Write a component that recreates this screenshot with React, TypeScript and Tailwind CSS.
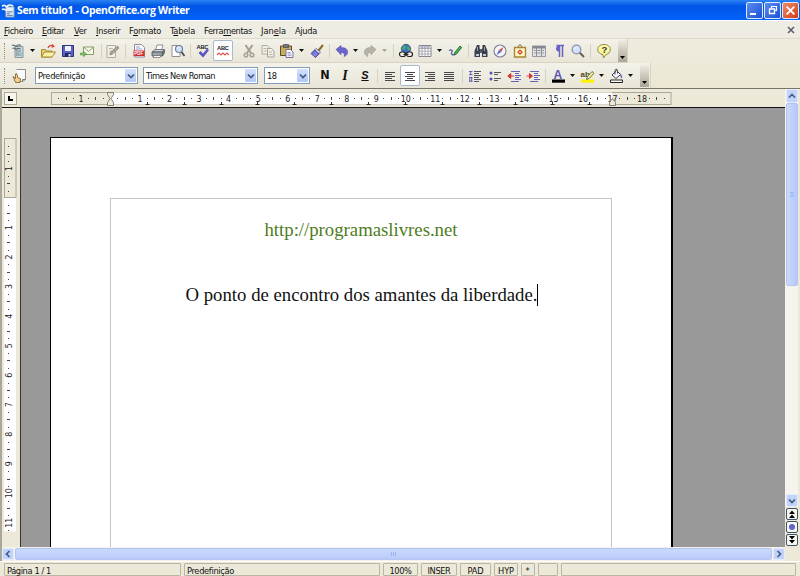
import { useLayoutEffect, useRef, type ReactNode } from "react";

/* Text whose tracking is adjusted so that it fills an exact width. */
function Fit({ w, children, className = "" }: { w: number; children: ReactNode; className?: string }) {
  const ref = useRef<HTMLSpanElement>(null);
  useLayoutEffect(() => {
    const el = ref.current;
    if (!el) return;
    el.style.letterSpacing = "0px";
    const natural = el.getBoundingClientRect().width;
    const count = (el.textContent ?? "").length;
    el.style.letterSpacing = `${(w - natural) / count}px`;
  }, [w]);
  return (
    <span ref={ref} className={`inline-block shrink-0 whitespace-nowrap ${className}`}>
      {children}
    </span>
  );
}

function Icon({ children, size = "size-4" }: { children: ReactNode; size?: string }) {
  return (
    <svg viewBox="0 0 16 16" className={`${size} shrink-0`} fill="none">
      {children}
    </svg>
  );
}

function Slot({ w, children }: { w: string; children?: ReactNode }) {
  return <div className={`flex h-full shrink-0 items-center justify-center ${w}`}>{children}</div>;
}

const Sep = ({ w }: { w: string }) => (
  <Slot w={w}>
    <div className="h-3.5 w-px shrink-0 bg-[#d6d2c2]" />
  </Slot>
);

const Arrow = ({ muted = false }: { muted?: boolean }) => (
  <Slot w="w-[9px]">
    <svg viewBox="0 0 5 3" className="h-[3px] w-[5px]">
      <path d="M0 0h5L2.5 3z" fill={muted ? "#a9a698" : "#111"} />
    </svg>
  </Slot>
);

const Grip = () => (
  <Slot w="w-2">
    <div className="h-4 w-0 border-l border-dotted border-[#8f8b7c]" />
  </Slot>
);

const Overflow = ({ h }: { h: string }) => (
  <div className={`flex w-[9px] shrink-0 items-end justify-center bg-linear-to-b from-[#eeebe0] to-[#aaa798] pb-[3px] ${h}`}>
    <svg viewBox="0 0 5 3" className="h-[3px] w-[5px]">
      <path d="M0 0h5L2.5 3z" fill="#000" />
    </svg>
  </div>
);

/* ---------- standard toolbar icons ---------- */

const NewDoc = () => (
  <Icon>
    <path d="M5 3.500h8v11H5z" fill="#c9d6dc" stroke="#8496a0" />
    <path d="M2 2.500c2-1 3 0 4 1 1-1.200 3-2 5-1M2.500 5.500c2-.8 3 0 3.500 1 1-1 3-1.500 4.500-.5" stroke="#5b717b" strokeWidth="1.200" />
    <path d="M6 8h5M6 10h3M6 12h5" stroke="#6f848e" />
    <path d="M9.500 9.500h3v3h-3z" fill="#8fc0cc" />
  </Icon>
);
const Open = () => (
  <Icon>
    <path d="M1.500 14V6.500h4l1 1.500H12v6z" fill="#e8cf6a" stroke="#a58a35" />
    <path d="M1.500 14l3-5h11l-3.500 5z" fill="#fbf2a3" stroke="#a58a35" />
    <path d="M8 5c1-2.500 3-3 5-2" stroke="#d9473b" strokeWidth="1.300" />
    <path d="M12 .8l3 2.700-3.300 1.500z" fill="#d9473b" />
  </Icon>
);
const Save = () => (
  <Icon>
    <path d="M2.500 2.500h11v11h-11z" fill="#5a62c8" stroke="#2d327f" />
    <path d="M5 3h6v5H5z" fill="#f2f3ff" />
    <path d="M5 10h6v4H5z" fill="#232763" />
    <path d="M8.500 11h2v2.500h-2z" fill="#dfe2f5" />
  </Icon>
);
const Mail = () => (
  <Icon>
    <path d="M4.500 4h10v7.500h-10z" fill="#fbfcea" stroke="#8b9a6a" />
    <path d="M4.500 4l5 4.500 5-4.500" stroke="#8b9a6a" />
    <path d="M1.500 10h3V8.300l3.300 2.700-3.300 2.700V12h-3z" fill="#7cc25a" stroke="#4d8a38" strokeWidth=".5" />
  </Icon>
);
const Edit = () => (
  <Icon>
    <path d="M3 2.500h8.500v12H3z" fill="#f1efe6" stroke="#b0ad9f" />
    <path d="M5 5.500h4M5 8h3M5 10.500h2" stroke="#b7b4a8" />
    <path d="M6 12l1-3 6.500-6 1.500 2-6.500 6z" fill="#aaa798" stroke="#817e72" strokeWidth=".7" />
  </Icon>
);
const Pdf = () => (
  <Icon>
    <path d="M3.500 1.500h7l3 3V14h-10z" fill="#fafafa" stroke="#8d8d98" />
    <path d="M5 4h4M5 6h6" stroke="#9da2cf" />
    <path d="M2.500 7.500h11v5.500h-11z" fill="#d22a2e" />
    <text x="3.300" y="11.900" fontSize="4.500" fontWeight="700" fontFamily="Liberation Sans, sans-serif" fill="#fff">PDF</text>
  </Icon>
);
const Print = () => (
  <Icon>
    <path d="M5.500 7l1.500-5h6l-1.500 5z" fill="#fff" stroke="#777" strokeWidth=".8" />
    <path d="M2 9l3-2.500h9L12.500 9z" fill="#cfd2da" stroke="#62656e" strokeWidth=".8" />
    <path d="M2 9h10.500v4H2z" fill="#9ea2ad" stroke="#484b55" strokeWidth=".8" />
    <path d="M12.500 9L14.500 6.500V10l-2 3z" fill="#6e727d" stroke="#484b55" strokeWidth=".6" />
    <path d="M4 12.500h7l-1 2H3z" fill="#fff" stroke="#666" strokeWidth=".7" />
    <path d="M9.500 10.800h2" stroke="#59b34a" />
  </Icon>
);
const Preview = () => (
  <Icon>
    <path d="M2 2.500h8v11H2z" fill="#fff" stroke="#8f9096" />
    <circle cx="9" cy="6" r="3.500" fill="#cfe3fa" stroke="#6f7f9a" strokeWidth="1.200" />
    <path d="M11.500 9l3 4" stroke="#4c4c58" strokeWidth="1.800" />
    <path d="M7 5.500l2-1.500" stroke="#fff" />
  </Icon>
);
const SpellText = ({ y }: { y: string }) => (
  <text x="1.500" y={y} fontSize="5.800" fontWeight="700" fontFamily="Liberation Sans, sans-serif" textLength="12" fill="#26262c">
    ABC
  </text>
);
const Spell = () => (
  <Icon>
    <SpellText y="5.500" />
    <path d="M4.500 9l3.500 3.500 5-6" stroke="#5b55c4" strokeWidth="2.600" />
  </Icon>
);
const AutoSpell = () => (
  <Icon>
    <g transform="translate(.5 1.500)">
      <SpellText y="5.500" />
    </g>
    <path d="M2 12l2-2 2 2 2-2 2 2 2-2 2 2" stroke="#e05454" strokeWidth="1.100" />
  </Icon>
);
const Cut = () => (
  <Icon>
    <path d="M4.500 2l5.500 8M11.500 2L6 10" stroke="#a6a396" strokeWidth="2.200" />
    <circle cx="5" cy="12" r="1.800" stroke="#a6a396" strokeWidth="1.500" />
    <circle cx="11" cy="12" r="1.800" stroke="#a6a396" strokeWidth="1.500" />
  </Icon>
);
const Copy = () => (
  <Icon>
    <path d="M2 2.500h5l2 2V11H2z" fill="#f1efe6" stroke="#b0ad9f" />
    <path d="M7.500 5.500h4l2.500 2.500v6H7.500z" fill="#f1efe6" stroke="#a6a396" />
    <path d="M3.500 5.500h3M3.500 8h3M9 9h3M9 11.500h3.500" stroke="#b7b4a8" />
  </Icon>
);
const Paste = () => (
  <Icon>
    <path d="M1.500 3h11v9.500h-11z" fill="#c9ad5c" stroke="#5e4d25" />
    <path d="M4.500 1.500h5v3h-5z" fill="#77777f" stroke="#44444a" strokeWidth=".7" />
    <path d="M7 6.500h4.500l2.500 2.500v5.500H7z" fill="#fff" stroke="#70759c" />
    <path d="M8.500 9.500h3M8.500 11h4M8.500 12.700h4" stroke="#7b82c2" strokeWidth=".8" />
  </Icon>
);
const Brush = () => (
  <Icon>
    <path d="M9.500 7.500L14 2" stroke="#8a6a2c" strokeWidth="2" />
    <path d="M7 5.500l4.500 3.500-1.500 2L5.500 7z" fill="#d6d7e6" stroke="#4c4e86" strokeWidth=".7" />
    <path d="M5.500 7L2 10.500l4.500 4 3.500-3.500z" fill="#6c6bd6" stroke="#3d3c94" strokeWidth=".8" />
    <path d="M4 10.500l3 2.500M5.500 9l3 2.500" stroke="#b9b9f2" strokeWidth=".7" />
  </Icon>
);
const Undo = () => (
  <Icon>
    <path d="M2 6.500L7 2.500v2.300c4.500-.5 7 1.700 6.500 5-.2 2-1.500 3-3.500 3.700 1.200-3-.3-4-3-4v2.300z" fill="#6a66cc" stroke="#4a46a6" strokeWidth=".6" />
  </Icon>
);
const Redo = () => (
  <Icon>
    <path d="M14 6.500L9 2.500v2.300c-4.500-.5-7 1.700-6.500 5 .2 2 1.500 3 3.500 3.700-1.200-3 .3-4 3-4v2.300z" fill="#b7b4a7" stroke="#98958a" strokeWidth=".6" />
  </Icon>
);
const Link = () => (
  <Icon>
    <circle cx="8" cy="6" r="4.700" fill="#3f73c9" stroke="#28405e" strokeWidth=".7" />
    <path d="M5 3.500c2-2 3-.5 2.500 1.500S4.500 6 4 7zM9 4c2-1 3.500 1 3 3S9.500 7 9 4z" fill="#4cb457" />
    <rect x="1.500" y="9" width="6" height="4.500" rx="2.200" fill="#f3f3ee" stroke="#222" strokeWidth="1.200" />
    <rect x="8.500" y="9" width="6" height="4.500" rx="2.200" fill="#f3f3ee" stroke="#222" strokeWidth="1.200" />
    <path d="M5.500 11.300h5" stroke="#222" strokeWidth="1.200" />
  </Icon>
);
const Table = () => (
  <Icon>
    <path d="M2 2.500h12v11H2z" fill="#fff" stroke="#85858e" />
    <path d="M2 3h12v2.500H2z" fill="#c7cad8" />
    <path d="M2 5.500h12M2 8.200h12M2 11h12M5 3v10.500M8 3v10.500M11 3v10.500" stroke="#9a9ba4" strokeWidth=".8" />
  </Icon>
);
const Draw = () => (
  <Icon>
    <path d="M2 7.500c2.500-1.500 4 0 2.800 1.800S5.500 12.500 8 11.500" stroke="#5753a8" strokeWidth="1.300" />
    <path d="M7 12l.8-2.500L13 3l1.700 1.400-5.200 6.600z" fill="#43b255" stroke="#236b31" strokeWidth=".9" />
  </Icon>
);
const Binoculars = () => (
  <Icon>
    <path d="M4 2h2.500v2L7 7v7H1.500V8zM12 2H9.500v2L9 7v7h5.500V8z" fill="#3a3f4c" />
    <path d="M7 6h2v4H7z" fill="#555b69" />
    <path d="M4.500 4v4M11.500 4v4" stroke="#9aa4b8" />
    <path d="M3 11h3v2H3zM10 11h3v2h-3z" fill="#c0c6d2" />
  </Icon>
);
const Navigator = () => (
  <Icon>
    <circle cx="8" cy="8" r="6" fill="#f3f5fc" stroke="#7f8296" strokeWidth="1.100" />
    <path d="M11.500 4L9.300 9 7 7z" fill="#d94b3d" />
    <path d="M4.500 12L7 7l2.300 2z" fill="#5a66cf" />
  </Icon>
);
const Gallery = () => (
  <Icon>
    <path d="M5.500 4.500L8 1.500l2.500 3" stroke="#6d6340" />
    <path d="M2.500 4.500h11v9.500h-11z" fill="#fdf6c4" stroke="#a58432" strokeWidth="1.300" />
    <path d="M8 6.300l2.900 2.900L8 12.100 5.100 9.200z" fill="#d8453a" />
    <circle cx="8" cy="9.200" r=".9" fill="#fff0a8" />
  </Icon>
);
const DataSources = () => (
  <Icon>
    <path d="M1.500 3h13v10.500h-13z" fill="#e2e2e2" stroke="#9a9a9e" />
    <path d="M1.500 3h13v2.500h-13z" fill="#85888f" />
    <path d="M5.500 5v8M10.500 5v8" stroke="#8c8c92" />
    <path d="M3 7.500h1.500M3 10h1.500M6.500 7.500h3M6.500 10h3M11.500 7.500H13M11.500 10H13" stroke="#868a97" strokeWidth="1.200" />
  </Icon>
);
const Pilcrow = () => (
  <Icon>
    <path d="M12.500 2.800H7a3 3 0 000 5.700h1V3" fill="#6a62c4" />
    <path d="M5.500 2.600h7.500M8.500 3v11M11.500 3v11" stroke="#6a62c4" strokeWidth="1.500" />
  </Icon>
);
const Zoom = () => (
  <Icon>
    <circle cx="6.500" cy="6.500" r="4.300" fill="#cfe4fb" stroke="#8a92a6" strokeWidth="1.300" />
    <path d="M9.800 9.800l4.200 4.200" stroke="#6a5e58" strokeWidth="2" />
    <path d="M4.500 6l2-2" stroke="#fff" />
  </Icon>
);
const Help = () => (
  <Icon>
    <path d="M8 1.500c4 0 6.300 2.300 6.300 5 0 2.600-1.800 4.500-4.300 5L7.500 15 7 11.600C4 11.300 1.700 9.200 1.700 6.500c0-2.700 2.300-5 6.300-5z" fill="#fbf79a" stroke="#8d8749" />
    <text x="5.400" y="10" fontSize="9.500" fontWeight="700" fontFamily="Liberation Sans, sans-serif" fill="#33334a">?</text>
  </Icon>
);

/* ---------- formatting toolbar icons ---------- */

const Styles = () => (
  <Icon>
    <path d="M5.500 1.500h9v10l-3 2H8" fill="#fafafa" stroke="#8b8b92" />
    <path d="M11.500 13.500v-2h3" stroke="#777" />
    <path d="M2 8.500l2.500 2V6l1.300-.3 1 4 2.700.8-.5 4H4.500z" fill="#f2cf8a" stroke="#775c2a" strokeWidth=".8" />
  </Icon>
);

function Align({ kind }: { kind: "left" | "center" | "right" | "full" }) {
  const paths = {
    left: "M3 4.500h10M3 6.500h7M3 8.500h10M3 10.500h7M3 12.500h10",
    center: "M3 4.500h10M5 6.500h6M3 8.500h10M5 10.500h6M3 12.500h10",
    right: "M3 4.500h10M6 6.500h7M3 8.500h10M6 10.500h7M3 12.500h10",
    full: "M3 4.500h10M3 6.500h10M3 8.500h10M3 10.500h10M3 12.500h10",
  };
  return (
    <Icon>
      <path d={paths[kind]} stroke="#47474a" />
    </Icon>
  );
}
const Numbering = () => (
  <Icon>
    <path d="M2 3.500h3.500M3.700 3.500v3M2 6.700h3.500M2 9.500h3.500M2.800 9.500v4M4.700 9.500v4M2 13.200h3.500" stroke="#5550b4" strokeWidth=".9" />
    <path d="M7 3.500h7M7 5.500h5M7 7.500h7M7 9.500h5M7 11.500h7M7 13.500h5" stroke="#55555a" />
  </Icon>
);
const Bullets = () => (
  <Icon>
    <circle cx="4" cy="5" r="1.500" fill="#5550b4" />
    <circle cx="4" cy="11" r="1.500" fill="#5550b4" />
    <path d="M7 4.500h7M7 6.500h4M7 10.500h7M7 12.500h4" stroke="#55555a" />
  </Icon>
);
const Indent = ({ flip = false }: { flip?: boolean }) => (
  <Icon>
    <path d="M5 3.500h9M9 5.500h4M9 7.500h6M9 9.500h4M9 11.500h6M5 13.500h8" stroke="#6663bd" />
    {flip ? (
      <path d="M1.500 8h5M4.500 5.500L7.500 8l-3 2.500z" fill="#d4302c" stroke="#d4302c" strokeWidth=".9" />
    ) : (
      <path d="M8 8H3M4.800 5.500L1.800 8l3 2.500z" fill="#d4302c" stroke="#d4302c" strokeWidth=".9" />
    )}
  </Icon>
);
const FontColor = () => (
  <Icon>
    <text x="3.600" y="10.500" fontSize="12" fontWeight="700" fontFamily="Liberation Sans, sans-serif" fill="#5c55b8">A</text>
    <path d="M2 11.500h13v3.200H2z" fill="#000" />
  </Icon>
);
const Highlight = () => (
  <Icon>
    <path d="M2 11.500h13v3.200H2z" fill="#fbf400" />
    <text x="1.500" y="8.500" fontSize="8" fontWeight="700" fontFamily="Liberation Sans, sans-serif" fill="#4b4a20">ab</text>
    <path d="M7.500 11.500l1-3L13 3.500l2 1.700-4.500 5z" fill="#f5ef9a" stroke="#55532e" strokeWidth=".8" />
  </Icon>
);
const Fill = () => (
  <Icon>
    <path d="M4 7l4.500-4.500 4 4L8 10.500z" fill="#f5f5fa" stroke="#41414c" />
    <path d="M7 6.500v-4c0-1.800 2.500-1.800 2.500 0v3" stroke="#41414c" />
    <path d="M12 5.500c2 1 2.500 3 2 5-1.300-1-2-2.500-2-5z" fill="#6562c2" />
    <path d="M2.500 12h12v2.500h-12z" fill="#fff" stroke="#222" />
  </Icon>
);

function Combo({ text, w, textW }: { text: string; w: string; textW: number }) {
  return (
    <div className={`flex h-[17px] shrink-0 items-center justify-between border border-[#7f9db9] bg-white pl-[2px] pr-px ${w}`}>
      <Fit w={textW} className="pt-px">{text}</Fit>
      <div className="flex h-[13px] w-[11px] items-center justify-center rounded-[1px] bg-linear-to-b from-[#d3e0fd] to-[#b3c8f6]">
        <Chevron dir="down" />
      </div>
    </div>
  );
}

function Chevron({ dir }: { dir: "up" | "down" | "left" | "right" }) {
  const d = { up: "M1 5.500L4 2.500l3 3", down: "M1 2.500l3 3 3-3", left: "M5.500 1l-3 3 3 3", right: "M2.500 1l3 3-3 3" }[dir];
  return (
    <svg viewBox="0 0 8 8" className="size-2 shrink-0" fill="none">
      <path d={d} stroke="#44597f" strokeWidth="1.700" />
    </svg>
  );
}

const Pressed = ({ children }: { children: ReactNode }) => (
  <div className="flex h-[21px] w-5 shrink-0 items-center justify-center rounded-[2px] border border-[#a9b9c9] bg-white">{children}</div>
);

/* ---------- rulers ---------- */

const UNIT = 29.53;

function Ticks({ from, to, vertical = false }: { from: number; to: number; vertical?: boolean }) {
  const marks: ReactNode[] = [];
  for (let q = from; q <= to; q++) {
    const p = q * (UNIT / 4);
    if (q === 0) continue;
    if (q % 4 === 0) {
      const n = Math.abs(q / 4);
      marks.push(
        <text
          key={q}
          x={vertical ? 0 : p}
          y={vertical ? 0 : 9.2}
          transform={vertical ? `translate(12 ${p}) rotate(-90)` : undefined}
          textAnchor="middle"
          fontSize="8.800"
          fill="#222"
        >
          {n}
        </text>,
      );
    } else {
      const s = q % 2 === 0 ? 3 : 1;
      marks.push(
        vertical ? (
          <rect key={q} x={8.500 - s / 2} y={Math.round(p)} width={s} height={1} fill="#444" />
        ) : (
          <rect key={q} x={Math.round(p) - 0.5} y={6 - s / 2} width={1} height={s} fill="#444" />
        ),
      );
    }
  }
  return <g>{marks}</g>;
}

const HRuler = () => (
  <svg width="621" height="15" viewBox="-59.500 -0.500 621 15" fontFamily="DejaVu Sans Condensed, DejaVu Sans, sans-serif" className="shrink-0">
    <rect x="-59" y="0" width="619.500" height="12" fill="#ece9d8" stroke="#aca899" />
    <rect x="0" y="0" width="501.500" height="12" fill="#fff" />
    <Ticks from={-7} to={75} />
    {Array.from({ length: 13 }, (_, i) => (
      <path key={i} d={`M${Math.round((i + 1) * 36.850) - 2} 12h4M${Math.round((i + 1) * 36.850)} 9.500v2.500`} stroke="#333" />
    ))}
    <path d="M-3 0h6v2L.5 6 3 10v3h-6v-3L-.5 6-3 2z" fill="#ece9d8" stroke="#77746a" strokeWidth=".9" />
    <path d="M502 6l3 4v3h-6v-3z" fill="#ece9d8" stroke="#77746a" strokeWidth=".9" />
  </svg>
);

const VRuler = () => (
  <svg width="17" height="396" viewBox="0 -60 17 396" fontFamily="DejaVu Sans Condensed, DejaVu Sans, sans-serif" className="shrink-0">
    <rect x="4" y="0" width="12" height="333.500" fill="#fff" />
    <rect x="4.500" y="-59.500" width="11.500" height="59" fill="#ece9d8" stroke="#aca899" />
    <Ticks from={-7} to={45} vertical />
  </svg>
);

const menus: [string, string, string, number, string][] = [
  ["", "F", "icheiro", 29, "w-[38px]"],
  ["", "E", "ditar", 22, "w-[32px]"],
  ["", "V", "er", 12.5, "w-[22px]"],
  ["", "I", "nserir", 24.5, "w-[33px]"],
  ["F", "o", "rmato", 32, "w-[41px]"],
  ["T", "a", "bela", 25, "w-[34px]"],
  ["Ferra", "m", "entas", 48, "w-[57px]"],
  ["Jan", "e", "la", 25, "w-[34px]"],
  ["A", "j", "uda", 22, "w-[30px]"],
];

const status: [string, number, string][] = [
  ["Página 1 / 1", 44, "w-[177px] justify-start pl-[2px]"],
  ["Predefinição", 47, "w-[196px] justify-start pl-[2px]"],
  ["100%", 22, "w-[35px] justify-center"],
  ["INSER", 23, "w-[36px] justify-center"],
  ["PAD", 16, "w-[31px] justify-center"],
  ["HYP", 16, "w-[24px] justify-center"],
  ["*", 5, "w-[14px] justify-center"],
  ["", 0, "w-[20px]"],
  ["", 0, "w-[235px]"],
];

const winButton = "flex size-[17px] items-center justify-center rounded-[2px] border border-[#dfe9fb]";
const scrollButton = "flex shrink-0 items-center justify-center rounded-[2px] border border-[#e3ebfe] bg-[#c1d3fb]";
const navButton = "flex size-3 shrink-0 items-center justify-center rounded-[2px] border border-[#3e5268] bg-[#f6f6f1]";

export default function App() {
  return (
    <div className="flex h-[576px] w-[800px] flex-col overflow-hidden bg-[#ece9d8] font-['DejaVu_Sans_Condensed','DejaVu_Sans',sans-serif] text-[9.2px] leading-none text-[#111]">
      {/* title bar */}
      <header className="flex h-[20px] shrink-0 items-center bg-linear-to-b from-[#2b83f5] via-[#0055e5] via-30% to-[#0262fb] pl-px pr-px">
        <Icon size="size-[15px]">
          <path d="M5 4h9v11H5z" fill="#dfe9f4" stroke="#6d8fb6" />
          <path d="M1 3.500c2-1.500 4-.5 5 .8 1-2 4-3 7-1M1 7c2-1.200 3.500 0 4.500 1C6.500 6 9 5.500 11.500 7" stroke="#eef5ff" strokeWidth="1.700" />
          <path d="M6.500 9.500h6M6.500 11.500h3M6.500 13.200h6" stroke="#55789f" />
        </Icon>
        <Fit w={172.500} className="ml-px pt-px font-['Open_Sans',sans-serif] text-[10.5px] font-bold text-white">
          Sem título1 - OpenOffice.org Writer
        </Fit>
        <div className="ml-auto flex gap-px">
          <div className={`${winButton} bg-linear-to-br from-[#5b8bf2] to-[#1c4fd4]`}>
            <div className="mr-1 mt-[7px] h-[2px] w-[6px] bg-white" />
          </div>
          <div className={`${winButton} bg-linear-to-br from-[#5b8bf2] to-[#1c4fd4]`}>
            <svg viewBox="0 0 10 10" className="size-[10px]" fill="none" stroke="#fff">
              <path d="M3.500 3V1.500h5v4H7" strokeWidth="1.200" />
              <path d="M1.500 4h5v4.500h-5z" strokeWidth="1.300" />
            </svg>
          </div>
          <div className={`${winButton} bg-linear-to-br from-[#ee8a68] to-[#cf3a14]`}>
            <svg viewBox="0 0 10 10" className="size-[11px]" stroke="#fff" strokeWidth="1.600">
              <path d="M1.500 1.500l7 7M8.500 1.500l-7 7" />
            </svg>
          </div>
        </div>
      </header>

      {/* menu bar */}
      <nav className="flex h-[19px] shrink-0 items-center border-b border-t border-b-[#dedac9] border-t-white bg-[#efede3] pl-1 pr-[5px]">
        {menus.map(([a, key, b, fit, w]) => (
          <div key={a + key + b} className={`shrink-0 pt-[2px] ${w}`}>
            <Fit w={fit}>
              {a}
              <span className="underline decoration-[0.8px] underline-offset-1">{key}</span>
              {b}
            </Fit>
          </div>
        ))}
        <svg viewBox="0 0 8 8" className="ml-auto size-2" stroke="#5c6070" strokeWidth="1.600">
          <path d="M1 1l6 6M7 1L1 7" />
        </svg>
      </nav>

      <div className="h-[49px] shrink-0 bg-linear-to-b from-[#efecdf] to-[#ebe7d3]">
        {/* standard toolbar */}
        <div className="flex h-6 w-[628px] items-center border-b border-r border-b-[#d8d4c4] border-r-[#d8d4c4] bg-linear-to-b from-[#f3f1e9] to-[#e9e6d8]">
          <Grip />
          <Slot w="w-5"><NewDoc /></Slot>
          <Arrow />
          <Slot w="w-[21px]"><Open /></Slot>
          <Slot w="w-[19px]"><Save /></Slot>
          <Slot w="w-5"><Mail /></Slot>
          <Sep w="w-2" />
          <Slot w="w-[13px]"><Edit /></Slot>
          <Sep w="w-[15px]" />
          <Slot w="w-[11px]"><Pdf /></Slot>
          <Slot w="w-7"><Print /></Slot>
          <Slot w="w-[11px]"><Preview /></Slot>
          <Sep w="w-[15px]" />
          <Slot w="w-2.5"><Spell /></Slot>
          <Slot w="w-[30px]"><Pressed><AutoSpell /></Pressed></Slot>
          <Slot w="w-[21px]"><Cut /></Slot>
          <Slot w="w-[18px]"><Copy /></Slot>
          <Slot w="w-5"><Paste /></Slot>
          <Arrow />
          <Slot w="w-[21px]"><Brush /></Slot>
          <Sep w="w-[5px]" />
          <Slot w="w-[19px]"><Undo /></Slot>
          <Arrow />
          <Slot w="w-5"><Redo /></Slot>
          <Arrow muted />
          <Sep w="w-2" />
          <Slot w="w-[18px]"><Link /></Slot>
          <Slot w="w-5"><Table /></Slot>
          <Arrow />
          <Slot w="w-[21px]"><Draw /></Slot>
          <Sep w="w-1.5" />
          <Slot w="w-[19px]"><Binoculars /></Slot>
          <Slot w="w-[19px]"><Navigator /></Slot>
          <Slot w="w-[21px]"><Gallery /></Slot>
          <Slot w="w-[18px]"><DataSources /></Slot>
          <Slot w="w-[21px]"><Pilcrow /></Slot>
          <Slot w="w-[17px]"><Zoom /></Slot>
          <Sep w="w-[9px]" />
          <Slot w="w-[17px]"><Help /></Slot>
          <div className="w-1.5 shrink-0" />
          <Overflow h="h-[22px]" />
        </div>

        {/* formatting toolbar */}
        <div className="flex h-[25px] w-[651px] items-center border-r border-r-[#d8d4c4] bg-linear-to-b from-[#f3f1e9] to-[#e9e6d8]">
          <Grip />
          <Slot w="w-[22px]"><Styles /></Slot>
          <div className="w-[5px] shrink-0" />
          <Combo text="Predefinição" w="w-[103px]" textW={47} />
          <div className="w-[5px] shrink-0" />
          <Combo text="Times New Roman" w="w-[115px]" textW={69} />
          <div className="w-1.5 shrink-0" />
          <Combo text="18" w="w-[46px]" textW={9.500} />
          <div className="w-[5px] shrink-0" />
          <Slot w="w-5"><span className="font-['DejaVu_Sans_Condensed',sans-serif] text-[12.5px] font-bold">N</span></Slot>
          <Slot w="w-5"><span className="font-['Liberation_Serif',serif] text-[14px] font-bold italic">I</span></Slot>
          <Slot w="w-5"><span className="font-['Liberation_Sans',sans-serif] text-[11px] font-bold italic underline underline-offset-1">S</span></Slot>
          <Sep w="w-[5px]" />
          <Slot w="w-5"><Align kind="left" /></Slot>
          <Slot w="w-5"><Pressed><Align kind="center" /></Pressed></Slot>
          <Slot w="w-[19px]"><Align kind="right" /></Slot>
          <Slot w="w-5"><Align kind="full" /></Slot>
          <Sep w="w-[6px]" />
          <Slot w="w-5"><Numbering /></Slot>
          <Slot w="w-[19px]"><Bullets /></Slot>
          <Slot w="w-[19px]"><Indent /></Slot>
          <Slot w="w-5"><Indent flip /></Slot>
          <Sep w="w-[5px]" />
          <Slot w="w-5"><FontColor /></Slot>
          <Arrow />
          <Slot w="w-5"><Highlight /></Slot>
          <Arrow />
          <Slot w="w-5"><Fill /></Slot>
          <Arrow />
          <div className="w-[5px] shrink-0" />
          <Overflow h="h-[22px]" />
        </div>
      </div>

      {/* document window */}
      <div className="flex h-[473px] shrink-0 border-l-2 border-t border-l-[#aaa79a] border-t-[#77746a]">
        <div className="flex w-[783px] shrink-0 flex-col">
          <div className="flex h-[19px] shrink-0 border-b border-[#111] pt-[3px]">
            <div className="ml-[2px] flex size-[13px] items-center justify-center border border-[#aca899] bg-[#f8f6ec]">
              <div className="size-[5px] border-b-2 border-l-2 border-black" />
            </div>
            <div className="ml-[34px] h-[15px] shrink-0">
              <HRuler />
            </div>
          </div>
          <div className="flex h-[439px] shrink-0">
            <div className="-ml-[2px] flex w-5 shrink-0 pt-[30px]">
              <VRuler />
            </div>
            <main className="flex w-[765px] shrink-0 items-stretch border-l border-[#33332f] bg-[#999] pl-[29px] pt-[29px]">
              <div className="w-[623px] shrink-0 border-l border-r-2 border-t border-black bg-white pl-[59px] pt-[60px]">
                <div className="flex h-full w-[502px] flex-col items-center border border-b-0 border-[#c4c4c4] font-['Liberation_Serif',serif] text-[18.75px] leading-[22px]">
                  <p className="mt-5 h-[22px] text-[#4e7c22]">
                    <Fit w={193}>http://programaslivres.net</Fit>
                  </p>
                  <p className="mt-[43px] flex h-[22px] pl-px">
                    <Fit w={352}>O ponto de encontro dos amantes da liberdade.</Fit>
                    <span className="-ml-px h-[22px] w-px shrink-0 bg-black" />
                  </p>
                </div>
              </div>
            </main>
          </div>
          <div className="flex h-[14px] shrink-0 bg-[#f3f1e8] py-px">
            <div className={`${scrollButton} h-3 w-3`}>
              <Chevron dir="left" />
            </div>
            <div className="ml-px flex h-3 flex-1 items-center justify-center gap-px rounded-[2px] border border-[#b3c6f2] bg-linear-to-b from-[#cbd9fd] to-[#bacbfa]">
              <i className="h-1 w-px bg-[#9db5ee]" />
              <i className="h-1 w-px bg-[#9db5ee]" />
              <i className="h-1 w-px bg-[#9db5ee]" />
            </div>
            <div className={`${scrollButton} ml-px h-3 w-3`}>
              <Chevron dir="right" />
            </div>
          </div>
        </div>
        <div className="flex w-[13px] shrink-0 flex-col items-center bg-[#f5f4ee]">
          <div className={`${scrollButton} h-[14px] w-3`}>
            <Chevron dir="up" />
          </div>
          <div className="flex h-[183px] w-3 shrink-0 flex-col items-center justify-center gap-px rounded-[2px] border border-[#b3c6f2] bg-linear-to-r from-[#cbd9fd] to-[#b5c8fa]">
            <i className="h-px w-1 bg-[#9db5ee]" />
            <i className="h-px w-1 bg-[#9db5ee]" />
            <i className="h-px w-1 bg-[#9db5ee]" />
          </div>
          <div className="h-[208px] shrink-0" />
          <div className={`${scrollButton} h-[13px] w-3`}>
            <Chevron dir="down" />
          </div>
          <div className="flex w-full flex-1 flex-col items-center gap-px bg-[#ece9d8] pt-px">
            <div className={navButton}>
              <svg viewBox="0 0 8 8" className="size-2"><path d="M1 4l3-3.500L7 4zM1 8l3-3.500L7 8z" /></svg>
            </div>
            <div className={navButton}>
              <div className="size-[6px] rounded-full bg-[#6462c8]" />
            </div>
            <div className={navButton}>
              <svg viewBox="0 0 8 8" className="size-2"><path d="M1 0l3 3.500L7 0zM1 4l3 3.500L7 4z" /></svg>
            </div>
          </div>
        </div>
      </div>

      {/* status bar */}
      <footer className="flex h-[15px] shrink-0 gap-[3px] border-t border-white pl-1 pt-px">
        {status.map(([text, fit, cls], i) => (
          <div key={i} className={`flex h-[13px] shrink-0 items-center rounded-[1px] border border-[#bab6a5] pt-[2px] ${cls}`}>
            {text && <Fit w={fit}>{text}</Fit>}
          </div>
        ))}
      </footer>
    </div>
  );
}
